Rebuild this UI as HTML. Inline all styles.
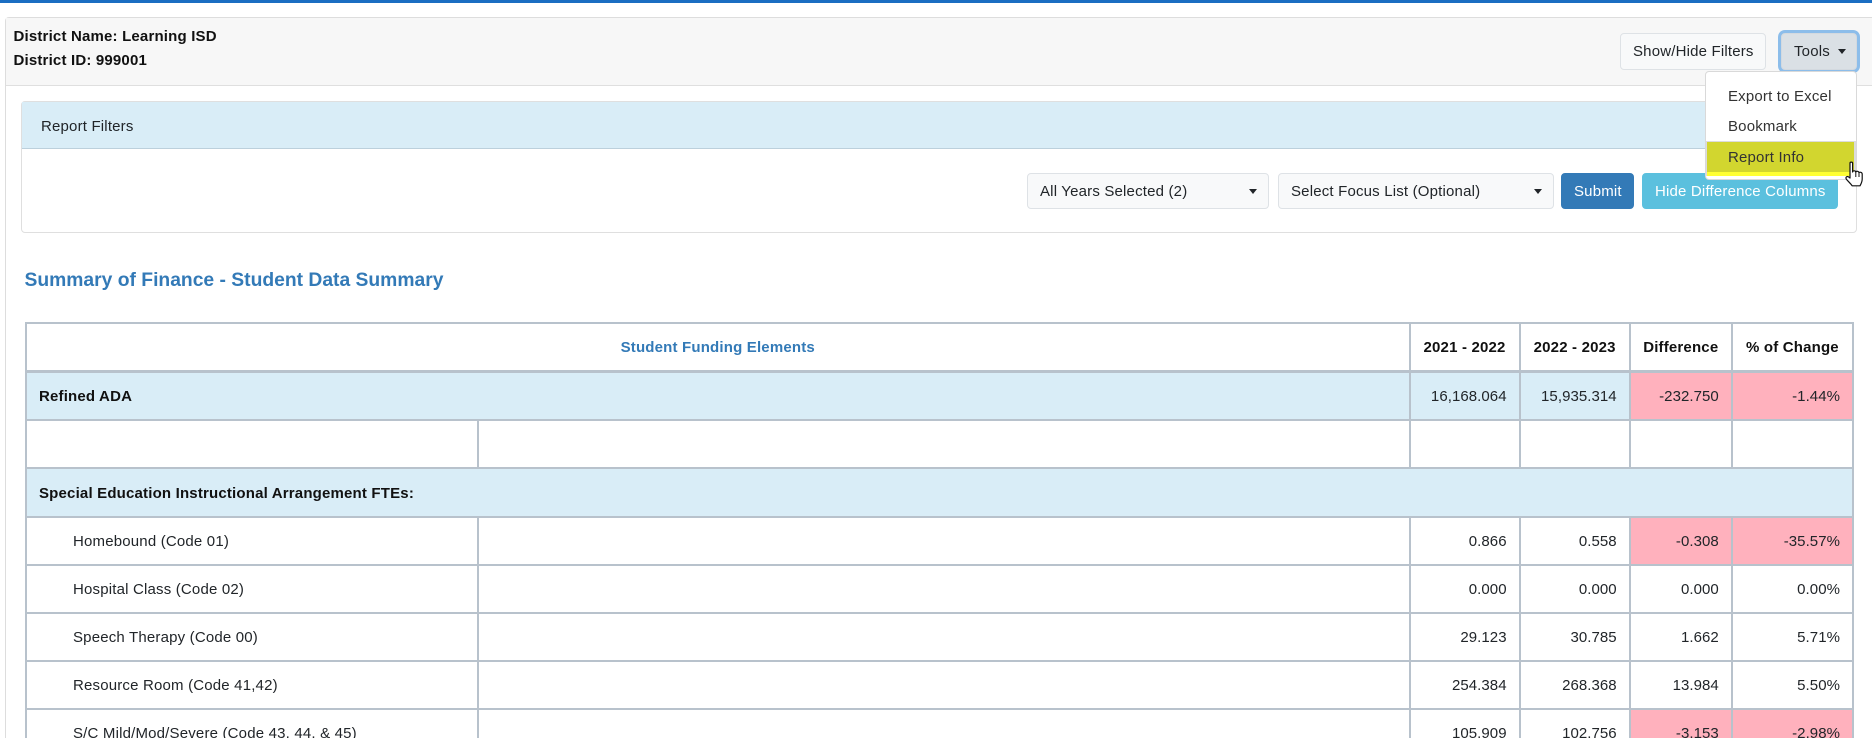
<!DOCTYPE html>
<html lang="en">
<head>
<meta charset="utf-8">
<title>Summary of Finance - Student Data Summary</title>
<style>
*{box-sizing:border-box}
html,body{margin:0;padding:0;width:1872px;height:738px;overflow:hidden;background:#fff}
body{position:relative;font-family:"Liberation Sans",Arial,sans-serif;font-size:15px;letter-spacing:.18px;color:#212529;line-height:20px}
.abs{position:absolute;white-space:nowrap}
#top{left:0;top:0;width:1872px;height:3px;background:#1b6ec2}
#page{left:5px;top:17px;width:1867px;height:721px;border-left:1px solid #ddd;border-top:1px solid #ddd;border-top-left-radius:4px}
#hdr{left:6px;top:18px;width:1866px;height:68px;background:#f7f7f7;border-bottom:1px solid #dfdfdf}
.b{font-weight:700;color:#111}
.btn{position:absolute;height:37px;border-radius:4px;line-height:35px;white-space:nowrap;border:1px solid #dee2e6;background:#f8f9fa;text-align:left}
#show{left:1620px;top:33px;width:146px;padding-left:12px}
#tools{left:1781px;top:33px;width:76px;height:37px;line-height:35px;background:#dae0e5;border:1px solid #d3d9df;box-shadow:0 0 0 3px #8cbdea;padding-left:12px;border-radius:4px}
.caret{position:absolute;width:0;height:0;border-left:4px solid transparent;border-right:4px solid transparent;border-top:5px solid #212529}
#filters{left:21px;top:101px;width:1836px;height:132px;border:1px solid #dfdfdf;border-radius:4px;background:#fff}
#fhead{position:absolute;left:0;top:0;width:100%;height:47px;background:#d9edf7;border-bottom:1px solid #bcd0dc;padding:15px 0 0 19px;line-height:20px}
#sel1{left:1027px;top:173px;width:242px;height:36px;line-height:36px;padding-left:12px}
#sel2{left:1278px;top:173px;width:276px;height:36px;line-height:36px;padding-left:12px}
#sub{left:1561px;top:173px;width:73px;height:36px;line-height:36px;background:#337ab7;border-color:#337ab7;color:#fff;padding-left:12px}
#hide{left:1642px;top:173px;width:196px;height:36px;line-height:36px;background:#5bc0de;border-color:#5bc0de;color:#fff;padding-left:12px}
#title{left:24.5px;top:270px;font-size:19.3px;letter-spacing:0;font-weight:700;color:#337ab7;line-height:22px}
table{position:absolute;left:25px;top:322px;width:1829px;table-layout:fixed;border-collapse:separate;border-spacing:0;border-left:2px solid #b8c2cc;border-top:2px solid #b8c2cc}
td,th{border-right:2px solid #b8c2cc;border-bottom:2px solid #b8c2cc;padding:2px 12px 0;font-size:15px;line-height:20px;vertical-align:middle;font-weight:400;white-space:nowrap;overflow:hidden}
th{font-weight:700;color:#111;text-align:center;border-bottom-width:3px}
.blue{color:#337ab7}
.r{text-align:right;letter-spacing:.06px}
.info td{background:#d9edf7}
td.pink{background:#ffb1bd}
.i{padding-left:46px}
.bl{font-weight:700;color:#111}
#menu{left:1705px;top:71px;width:152px;height:109px;background:#fff;border:1px solid #d9d9d9;border-radius:4px}
.mi{position:absolute;left:22px;white-space:nowrap;color:#333}
#gray{position:absolute;left:0;top:69px;width:150px;height:35px;background:#dcdcdc}
#olive{position:absolute;left:1px;top:70px;width:147px;height:30px;background:#d2d62f}
#yellow{position:absolute;left:1px;top:100px;width:147px;height:4px;background:#ffff33}
#hand{position:absolute;left:1845px;top:161px;width:20px;height:26px}
</style>
</head>
<body>
<div class="abs" id="top"></div>
<div class="abs" id="page"></div>
<div class="abs" id="hdr"></div>
<div class="abs b" style="left:13.5px;top:27px">District Name: Learning ISD</div>
<div class="abs b" style="left:13.5px;top:51px">District ID: 999001</div>
<div class="btn" id="show">Show/Hide Filters</div>

<div class="abs" id="filters"><div id="fhead">Report Filters</div></div>

<div class="btn" id="sel1">All Years Selected (2)<span class="caret" style="left:221px;top:15px"></span></div>
<div class="btn" id="sel2">Select Focus List (Optional)<span class="caret" style="left:255px;top:15px"></span></div>
<div class="btn" id="sub">Submit</div>
<div class="btn" id="hide">Hide Difference Columns</div>

<div class="abs" id="title">Summary of Finance - Student Data Summary</div>

<table>
<colgroup><col style="width:452px"><col style="width:930px"><col style="width:110px"><col style="width:110px"><col style="width:102px"><col style="width:121px"></colgroup>
<tr style="height:49px"><th colspan="2" class="blue" style="color:#337ab7">Student Funding Elements</th><th>2021 - 2022</th><th>2022 - 2023</th><th>Difference</th><th>% of Change</th></tr>
<tr style="height:48px" class="info"><td colspan="2" class="bl">Refined ADA</td><td class="r">16,168.064</td><td class="r">15,935.314</td><td class="r pink">-232.750</td><td class="r pink">-1.44%</td></tr>
<tr style="height:48px"><td></td><td></td><td></td><td></td><td></td><td></td></tr>
<tr style="height:49px" class="info"><td colspan="6" class="bl">Special Education Instructional Arrangement FTEs:</td></tr>
<tr style="height:48px"><td class="i">Homebound (Code 01)</td><td></td><td class="r">0.866</td><td class="r">0.558</td><td class="r pink">-0.308</td><td class="r pink">-35.57%</td></tr>
<tr style="height:48px"><td class="i">Hospital Class (Code 02)</td><td></td><td class="r">0.000</td><td class="r">0.000</td><td class="r">0.000</td><td class="r">0.00%</td></tr>
<tr style="height:48px"><td class="i">Speech Therapy (Code 00)</td><td></td><td class="r">29.123</td><td class="r">30.785</td><td class="r">1.662</td><td class="r">5.71%</td></tr>
<tr style="height:48px"><td class="i">Resource Room (Code 41,42)</td><td></td><td class="r">254.384</td><td class="r">268.368</td><td class="r">13.984</td><td class="r">5.50%</td></tr>
<tr style="height:48px"><td class="i">S/C Mild/Mod/Severe (Code 43, 44, &amp; 45)</td><td></td><td class="r">105.909</td><td class="r">102.756</td><td class="r pink">-3.153</td><td class="r pink">-2.98%</td></tr>
</table>

<div class="abs" id="tools">Tools<span class="caret" style="left:56px;top:15px"></span></div>
<div class="abs" id="menu">
  <div class="mi" style="top:15px">Export to Excel</div>
  <div class="mi" style="top:45px">Bookmark</div>
  <div id="gray"></div><div id="olive"></div><div id="yellow"></div>
  <div class="mi" style="top:76px">Report Info</div>
</div>
<svg id="hand" viewBox="0 0 20 26" xmlns="http://www.w3.org/2000/svg">
<path d="M5 2.2C5 .8 7.6 .8 7.6 2.2V11C8 9.4 10.6 9.4 10.8 11.2 11.2 9.8 13.8 10 14 11.8 14.6 10.8 17 11 17.2 13V18C17.2 21 16 23 15 24.8H7.2C6 23 3.4 20.6 1.4 18.2.2 16.6 1.8 14.8 3.4 15.8L5 17Z" fill="#fff" stroke="#111" stroke-width="1.2" stroke-linejoin="round"/>
<path d="M10.8 11.2V16M14 11.8V16" fill="none" stroke="#111" stroke-width="1"/>
</svg>
</body>
</html>
